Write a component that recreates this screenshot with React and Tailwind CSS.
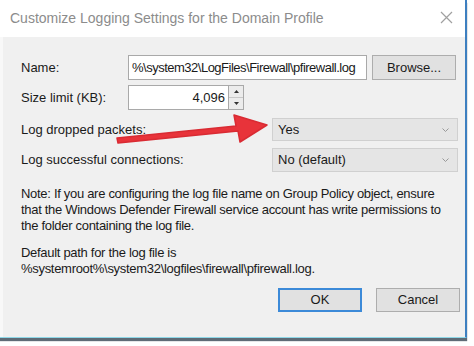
import React from "react";

export default function App() {
  const font = { fontFamily: '"Liberation Sans", Arial, sans-serif' };
  return (
    <div className="w-[474px] h-[346px] bg-white overflow-hidden relative" style={font}>
      <div className="w-[467px] h-[338px] flex flex-col border-r-[2px] border-r-[#3d7fc0] border-b border-b-[#8fd8e8] shadow-[0_3px_1px_#5f6b76]">
        <div className="h-[37px] bg-white flex items-center justify-between pl-[10px] pr-[12px] shrink-0">
          <span className="text-[14px] text-[#8c8c8c] whitespace-nowrap">Customize Logging Settings for the Domain Profile</span>
          <svg width="13" height="13" viewBox="0 0 13 13" className="mt-[-2px]">
            <path d="M1 1 L12 12 M12 1 L1 12" stroke="#a0a0a0" strokeWidth="1.2" />
          </svg>
        </div>
        <div className="flex-1 bg-[#f0f0f0] border-l-[3px] border-l-[#f8f8f8] pl-[18px] pt-[18px] text-[13px] text-[#1a1a1a] relative whitespace-nowrap">
          <div className="flex items-center h-[25px]">
            <span className="w-[107px]">Name:</span>
            <div className="w-[239px] h-[25px] bg-white border border-[#a9a9a9] flex items-center px-[3px] text-[13px] tracking-[-0.5px] whitespace-nowrap overflow-hidden">%\system32\LogFiles\Firewall\pfirewall.log</div>
            <div className="ml-[5px] w-[84px] h-[25px] bg-[#e1e1e1] border border-[#adadad] flex items-center justify-center">Browse...</div>
          </div>
          <div className="flex items-center h-[25px] mt-[5px]">
            <span className="w-[107px]">Size limit (KB):</span>
            <div className="w-[101px] h-[25px] bg-white border border-[#a9a9a9] flex items-center justify-end pr-[3px]">4,096</div>
            <div className="w-[15px] h-[25px] border border-l-0 border-[#a9a9a9] bg-white flex flex-col">
              <div className="flex-1 bg-[#ececec] border-b border-[#c8c8c8] flex items-center justify-center">
                <svg width="5" height="3" viewBox="0 0 5 3"><path d="M0 3 L2.5 0 L5 3Z" fill="#333" /></svg>
              </div>
              <div className="flex-1 bg-[#ececec] flex items-center justify-center">
                <svg width="5" height="3" viewBox="0 0 5 3"><path d="M0 0 L2.5 3 L5 0Z" fill="#333" /></svg>
              </div>
            </div>
          </div>
          <div className="flex items-center h-[23px] mt-[8px]">
            <span className="w-[251px]">Log dropped packets:</span>
            <div className="w-[186px] h-[23px] bg-[#e5e5e5] border border-[#d0d0d0] flex items-center justify-between pl-[5px] pr-[8px]">
              <span>Yes</span>
              <svg width="7" height="4" viewBox="0 0 7 4"><path d="M0.5 0.5 L3.5 3.5 L6.5 0.5" stroke="#999" fill="none" /></svg>
            </div>
          </div>
          <div className="flex items-center h-[24px] mt-[7px]">
            <span className="w-[251px]">Log successful connections:</span>
            <div className="w-[186px] h-[24px] bg-[#e5e5e5] border border-[#d0d0d0] flex items-center justify-between pl-[5px] pr-[8px]">
              <span>No (default)</span>
              <svg width="7" height="4" viewBox="0 0 7 4"><path d="M0.5 0.5 L3.5 3.5 L6.5 0.5" stroke="#999" fill="none" /></svg>
            </div>
          </div>
          <div className="mt-[14px] leading-[16px] tracking-[-0.3px]">
            <div>Note: If you are configuring the log file name on Group Policy object, ensure</div>
            <div>that the Windows Defender Firewall service account has write permissions to</div>
            <div>the folder containing the log file.</div>
          </div>
          <div className="mt-[11px] leading-[16px] tracking-[-0.3px]">
            <div>Default path for the log file is</div>
            <div>%systemroot%\system32\logfiles\firewall\pfirewall.log.</div>
          </div>
          <div className="flex justify-end mt-[11px] pr-[5px] gap-[14px]">
            <div className="w-[84px] h-[24px] bg-[#e1e1e1] border-[2px] border-[#3c8ad8] flex items-center justify-center">OK</div>
            <div className="w-[84px] h-[24px] bg-[#e1e1e1] border border-[#adadad] flex items-center justify-center">Cancel</div>
          </div>
        </div>
      </div>
      <svg className="absolute left-0 top-0 pointer-events-none" width="474" height="346" viewBox="0 0 474 346">
        <path d="M118 143 L238 131 L240 142 L267 125 L234 115 L236 126 L117 138 Z" fill="#e8333a" stroke="#d92b33" strokeWidth="1.5" strokeLinejoin="round" />
      </svg>
    </div>
  );
}
